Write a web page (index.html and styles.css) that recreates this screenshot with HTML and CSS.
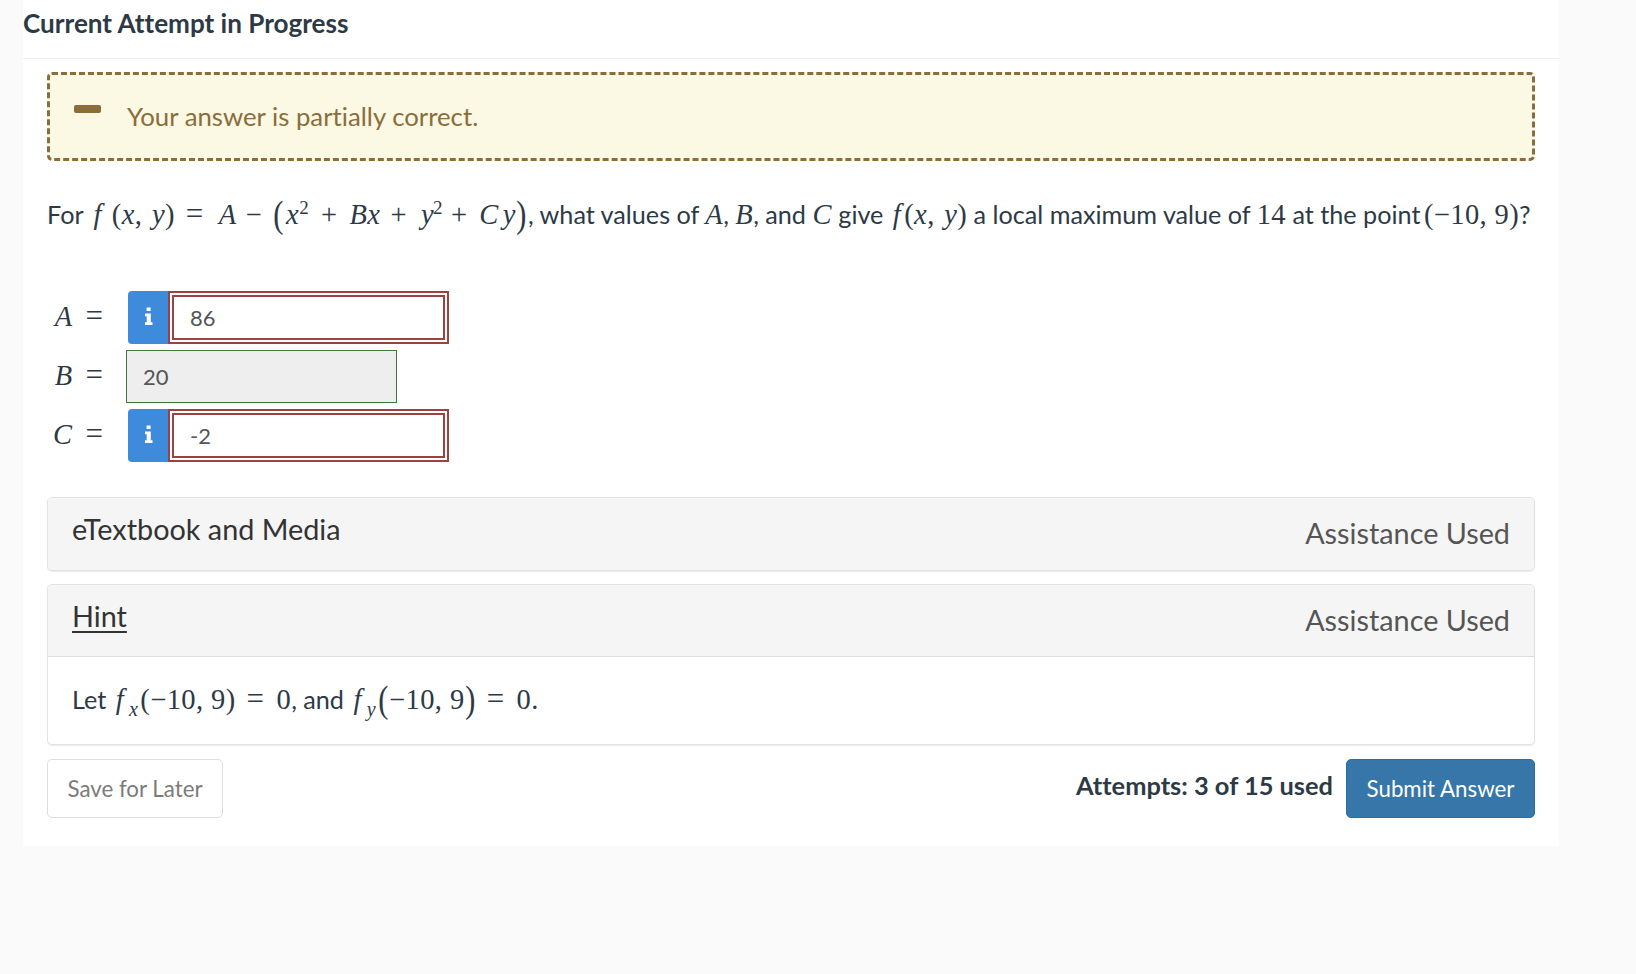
FILE: index.html
```html
<!DOCTYPE html>
<html lang="en">
<head>
<meta charset="utf-8">
<title>Current Attempt in Progress</title>
<link rel="stylesheet" href="styles.css">
</head>
<body>
<main class="page">
  <header class="head"><h1>Current Attempt in Progress</h1></header>
  <div class="content">
    <div class="alert">
      <span class="minus"></span>
      <span class="alert-text">Your answer is partially correct.</span>
    </div>
    <p class="question">For <span class="m"><i class="f">f</i><span class="th"></span>(<i>x</i>,<span class="cm"></span> <i>y</i>)<span class="rel">=</span><i class="a">A</i><span class="bin minus-op">−</span><span class="big">(</span><i>x</i><sup>2</sup><span class="bin">+</span><i>Bx</i><span class="bin">+</span><i class="y">y</i><sup>2</sup><span class="bin">+</span><i class="c">C</i><i>y</i><span class="big">)</span></span>, what values of <span class="m"><i>A</i></span>, <span class="m"><i>B</i></span>, and <span class="m"><i>C</i></span> give <span class="m"><i class="f">f</i>(<i>x</i>,<span class="cm"></span> <i>y</i>)</span> a local maximum value of <span class="m">14</span> at the point <span class="m pt">(−10, 9)</span>?</p>
    <div class="rows">
      <div class="row">
        <span class="lab m"><i>A</i><span class="rel">=</span></span>
        <span class="info"><svg viewBox="0 0 10 20" width="10" height="20"><path d="M2.600 1.500h4v3.600h-4zM1 7.500h5.800v8.700h1.700v2.800H1v-2.800h1.700v-5.900H1z" fill="#fff"/></svg></span>
        <span class="bad"><span class="bad-in">86</span></span>
      </div>
      <div class="row">
        <span class="lab m"><i>B</i><span class="rel">=</span></span>
        <span class="good">20</span>
      </div>
      <div class="row">
        <span class="lab m"><i>C</i><span class="rel">=</span></span>
        <span class="info"><svg viewBox="0 0 10 20" width="10" height="20"><path d="M2.600 1.500h4v3.600h-4zM1 7.500h5.800v8.700h1.700v2.800H1v-2.800h1.700v-5.900H1z" fill="#fff"/></svg></span>
        <span class="bad"><span class="bad-in">-2</span></span>
      </div>
    </div>
    <section class="card first">
      <div class="card-head"><span class="card-title">eTextbook and Media</span><span class="used">Assistance Used</span></div>
    </section>
    <section class="card">
      <div class="card-head"><span class="card-title hint">Hint</span><span class="used">Assistance Used</span></div>
      <div class="card-body">Let <span class="m"><i class="f">f</i><sub><i>x</i></sub>(−10, 9)<span class="rel">=</span>0</span>, and <span class="m"><i class="f">f</i><sub><i>y</i></sub><span class="big">(</span>−10, 9<span class="big">)</span><span class="rel">=</span>0.</span></div>
    </section>
    <div class="actions">
      <button class="save" type="button">Save for Later</button>
      <div class="right">
        <span class="attempts">Attempts: 3 of 15 used</span>
        <button class="submit" type="button">Submit Answer</button>
      </div>
    </div>
  </div>
</main>
</body>
</html>
```
FILE: styles.css
```css
* { box-sizing: border-box; }
html, body { margin: 0; }
body {
  min-height: 974px;
  background: #fafafa;
  font-family: Lato, "Liberation Sans", sans-serif;
  font-variant-ligatures: none;
  color: #2d3a46;
}
.page { width: 1536px; margin-left: 23px; background: #fff; }
.head { height: 59px; border-bottom: 1px solid #eeeeee; }
.head h1 { margin: 0; padding-top: 7px; font-size: 26.1px; line-height: 32px; font-weight: 700; color: #2d3a46; }
.content { padding: 13px 24px 28px; }
.alert {
  height: 89px;
  display: flex;
  align-items: flex-start;
  padding: 26px 0 0 24px;
  background: #fbf8e3;
  border: 3px dashed #8a6d3b;
  border-radius: 5px;
  color: #8a6d3b;
}
.minus { width: 27px; height: 8px; margin-top: 4px; border-radius: 2px; background: #8a6d3b; }
.alert-text { margin-left: 26px; font-size: 25.75px; line-height: 31px; }
.question { margin: 30px 0 0; height: 100px; font-size: 25.2px; line-height: 46px; white-space: nowrap; }
.m { font-family: "Liberation Serif", serif; font-size: 28.5px; letter-spacing: .4px; }
.m sup { font-size: 19px; line-height: 0; margin-right: 2px; }
.m sub { font-size: 20px; line-height: 0; margin: 0 2px; }
.f { margin: 0 3px 0 3px; }
.question > .m:first-of-type > .f:first-child { margin-left: 4px; }
.c { margin-right: 4px; }
.y { margin-left: 2px; }
.y + sup { margin: 0 -2px 0 -1px; }
.a { margin-left: 4px; }
.cm { margin-left: 2px; }
.th { margin-left: 7px; }
.pt { margin-left: -3px; }
.rel { margin: 0 11px; font-size: 31px; line-height: 0; }
.bin { margin: 0 12px 0 10px; }
.minus-op { margin: 0 11px 0 9px; }
.big { display: inline-block; font-size: 38px; line-height: 30px; font-weight: 400; vertical-align: -3px; transform: scaleX(.8); margin: 0 1px 0 -1px; }
.big:last-child { margin-right: 0; }
.rows { display: flex; flex-direction: column; gap: 6px; }
.row { display: flex; height: 53px; align-items: stretch; }
.lab { width: 81px; padding: 4px 25px 0 0; line-height: 44px; white-space: nowrap; text-align: right; }
.lab .rel { margin: 0 0 0 13px; letter-spacing: 0; }
.info { width: 40px; display: flex; align-items: center; justify-content: center; background: #3e8bdc; border-radius: 4px 0 0 4px; }
.info svg { margin: 0 0 3px 2px; }
.bad { width: 281px; padding: 2px; border: 2px solid #9c4341; }
.bad-in { display: block; height: 100%; border: 2px solid #9c4341; margin: 0; padding-left: 16px; font-size: 22px; line-height: 42px; color: #555; }
.good { width: 271px; margin-left: -2px; padding-left: 16px; background: #eee; border: 1px solid #3f763d; font-size: 22px; line-height: 51px; color: #555; }
.card { margin-top: 13px; background: #fff; border: 1px solid #e3e3e3; border-radius: 5px; box-shadow: 0 1px 1px rgba(0,0,0,.08); overflow: hidden; }
.card.first { margin-top: 35px; }
.card-head { display: flex; justify-content: space-between; height: 72px; padding: 0 24px; background: #f5f5f5; }
.card + .card .card-head { border-bottom: 1px solid #ddd; }
.card-title { font-size: 28.8px; line-height: 62px; color: #333; }
.hint { text-decoration: underline; text-decoration-thickness: 2px; text-underline-offset: 4px; }
.used { font-size: 28.8px; line-height: 70px; color: #555; }
.card-body { height: 87px; padding: 0 24px; font-size: 25.2px; line-height: 84px; white-space: nowrap; }
.card-body .rel { margin: 0 12px 0 11px; }
.card-body .big { margin: 0 -1px; }
.actions { display: flex; justify-content: space-between; align-items: stretch; margin-top: 14px; height: 59px; }
.save { width: 176px; background: #fff; border: 1px solid #ddd; border-radius: 5px; font: 400 22.3px Lato, sans-serif; color: #7b7b7b; }
.right { display: flex; gap: 13px; }
.attempts { font-size: 25.4px; font-weight: 700; line-height: 52px; color: #2d3a46; }
.submit { width: 189px; background: #3676a9; border: 1px solid #2e6da4; border-radius: 5px; font: 400 22.3px Lato, sans-serif; color: #fff; }
```
